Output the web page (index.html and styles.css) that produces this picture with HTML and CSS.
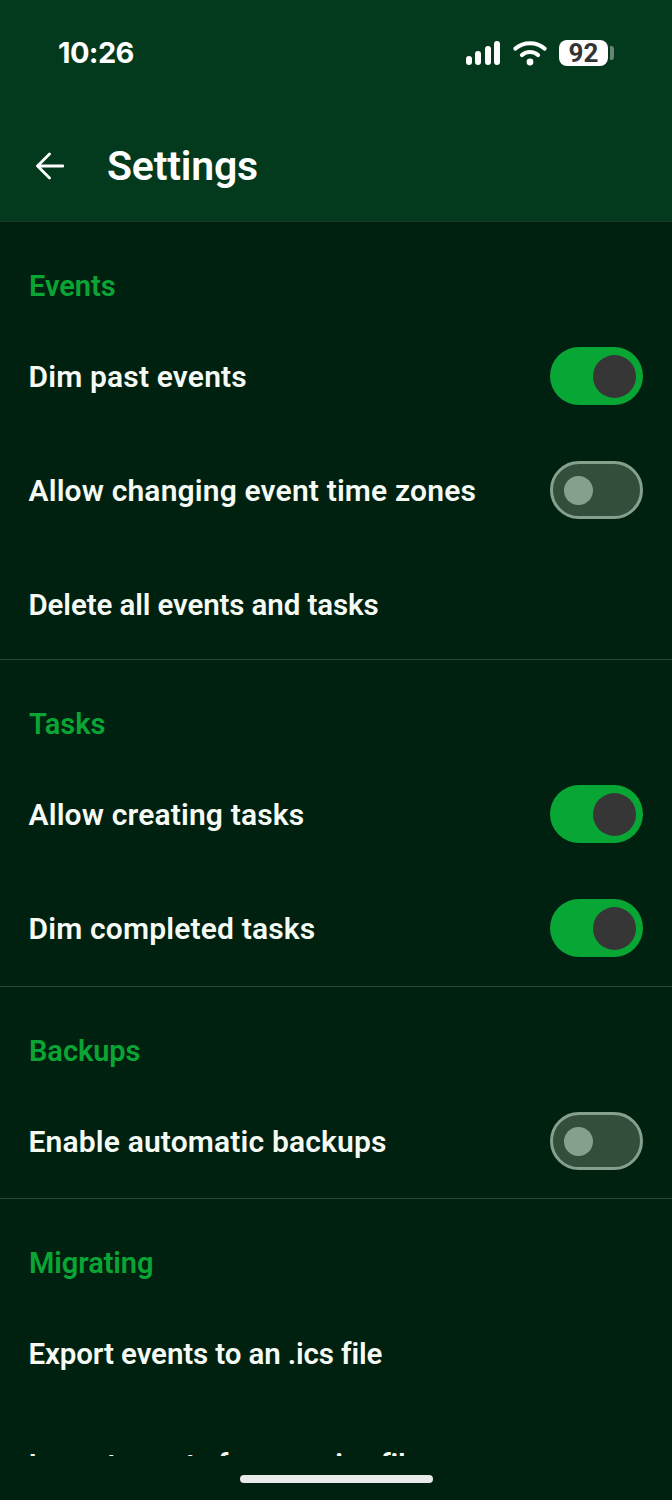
FILE: index.html
```html
<!DOCTYPE html>
<html lang="en">
<head>
<meta charset="utf-8">
<title>Settings</title>
<link rel="stylesheet" href="styles.css">
</head>
<body>
<div class="screen">
  <header class="header">
    <div class="status">
      <span class="time">10:26</span>
      <div class="status-icons">
        <svg class="signal" width="36" height="24" viewBox="0 0 36 24"><g fill="#fff"><rect x="1" y="15" width="6" height="9" rx="3"/><rect x="10" y="10" width="6" height="14" rx="3"/><rect x="20" y="5" width="6" height="19" rx="3"/><rect x="29" y="0" width="6" height="24" rx="3"/></g></svg>
        <svg class="wifi" width="34" height="26" viewBox="0 0 34 26"><g fill="none" stroke="#fff" stroke-width="4.2" stroke-linecap="round"><path d="M2.500 8.500C10.500 1.500 23.500 1.500 31.500 8.500"/><path d="M9 15C13.500 11 20.500 11 25 15"/></g><circle cx="17" cy="22" r="3.400" fill="#fff"/></svg>
        <div class="battery"><span class="battery-body">92</span><span class="battery-cap"></span></div>
      </div>
    </div>
    <div class="appbar">
      <svg class="back" width="30" height="28" viewBox="0 0 30 28"><path d="M29 14H3.500M15.500 2L3.500 14L15.500 26" fill="none" stroke="#fff" stroke-width="2.800" stroke-linecap="round" stroke-linejoin="round"/></svg>
      <h1 class="title">Settings</h1>
    </div>
  </header>
  <main class="content">
    <section class="section section-tight">
      <h2 class="heading">Events</h2>
      <div class="row"><span class="label">Dim past events</span><span class="toggle on"><span class="knob"></span></span></div>
      <div class="row"><span class="label">Allow changing event time zones</span><span class="toggle off"><span class="knob"></span></span></div>
      <div class="row row-action"><span class="label">Delete all events and tasks</span></div>
    </section>
    <section class="section">
      <h2 class="heading">Tasks</h2>
      <div class="row"><span class="label">Allow creating tasks</span><span class="toggle on"><span class="knob"></span></span></div>
      <div class="row"><span class="label">Dim completed tasks</span><span class="toggle on"><span class="knob"></span></span></div>
    </section>
    <section class="section section-short">
      <h2 class="heading">Backups</h2>
      <div class="row"><span class="label">Enable automatic backups</span><span class="toggle off"><span class="knob"></span></span></div>
    </section>
    <section class="section section-plain">
      <h2 class="heading">Migrating</h2>
      <div class="row row-action"><span class="label">Export events to an .ics file</span></div>
      <div class="row row-action"><span class="label">Import events from an .ics file</span></div>
    </section>
  </main>
  <footer class="footer"><span class="home"></span></footer>
</div>
</body>
</html>
```
FILE: styles.css
```css
* { box-sizing: border-box; }
html, body { margin: 0; padding: 0; background: #00210f; }
body { font-family: Roboto, "Noto Sans", sans-serif; color: #fff; }
.screen { width: 672px; height: 1500px; display: flex; flex-direction: column; overflow: hidden; background: #00210f; }
.header { height: 222px; flex: none; background: #033a1d; border-bottom: 1px solid #1b3a28; padding: 0 0 0 34px; }
.status { height: 107px; display: flex; justify-content: space-between; align-items: flex-start; padding: 36px 58px 0 24px; }
.time { font-family: Inter, Roboto, sans-serif; font-size: 29px; line-height: 34px; font-weight: 700; letter-spacing: -0.6px; }
.status-icons { display: flex; align-items: center; gap: 11px; height: 34px; }
.signal { margin-left: -3px; }
.wifi { margin: 0 1px 0 1px; }
.battery { display: flex; align-items: center; gap: 2px; }
.battery-body { width: 49px; height: 26px; background: #fff; border-radius: 8px; color: #333; font-size: 26px; font-weight: 700; line-height: 26px; text-align: center; }
.battery-cap { width: 4px; height: 14px; background: #6c8474; border-radius: 0 3px 3px 0; }
.appbar { display: flex; align-items: center; gap: 43px; height: 114px; }
.back { margin-top: 4px; flex: none; }
.title { margin: 4px 0 0; font-size: 41px; line-height: 48px; font-weight: 600; letter-spacing: -0.2px; }
.content { flex: 1; min-height: 0; overflow: hidden; }
.section { padding: 0 29px 0 28.5px; border-bottom: 1px solid #2a4435; height: 327px; }
.section-tight { height: 438px; }
.section-short { height: 212px; }
.section-plain { border-bottom: 0; height: auto; }
.heading { margin: 0 0 -33px; padding: 0 0 2px 0.5px; height: 130px; font-size: 29px; line-height: 38px; font-weight: 600; letter-spacing: -0.05px; color: #0aa534; display: flex; align-items: center; }
.row { height: 114px; display: flex; justify-content: space-between; align-items: center; font-size: 30px; font-weight: 600; letter-spacing: 0.16px; line-height: 36px; color: #f5faf4; }
.row-action { height: 111px; padding-top: 3px; font-size: 29.5px; letter-spacing: -0.12px; }
.label { padding-top: 2px; }
.toggle { width: 93px; height: 58px; border-radius: 29px; display: flex; align-items: center; flex: none; }
.toggle.on { background: #08a735; justify-content: flex-end; padding-right: 7px; }
.toggle.on .knob { width: 43px; height: 43px; background: #363636; border-radius: 50%; }
.toggle.off { background: #344e3c; border: 3px solid #86a08e; padding-left: 11px; }
.toggle.off .knob { width: 29px; height: 29px; background: #86a08e; border-radius: 50%; }
.footer { height: 44px; flex: none; display: flex; justify-content: center; padding-top: 19px; }
.home { width: 193px; height: 8px; background: #e8eaea; border-radius: 4px; }
```
